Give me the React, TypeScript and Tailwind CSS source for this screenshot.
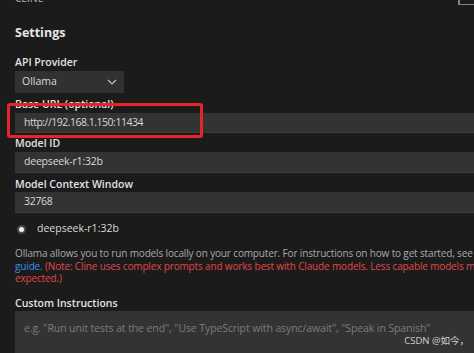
import React from "react";

const font = { fontFamily: '"Open Sans", "Noto Sans CJK SC", sans-serif' };

function Label({ text, mt }: { text: string; mt: string }) {
  return (
    <div className={`${mt} h-[14px] px-[15px] text-[10.5px] font-semibold leading-[14px] text-[#e2e2e2] whitespace-nowrap`}>
      {text}
    </div>
  );
}

function Input({ value, mt, h, track }: { value: string; mt: string; h: string; track: string }) {
  return (
    <div className={`${mt} ${h} ${track} ml-[15px] bg-[#333333] border-b border-[#3d3d3d] flex items-center pl-[9px] text-[10.5px] text-[#d8d8d8] whitespace-nowrap`}>
      {value}
    </div>
  );
}

export default function App() {
  return (
    <div
      className="relative w-[474px] h-[353px] overflow-hidden bg-[#1b1b1b] text-[#cccccc]"
      style={font}
    >
      <div className="h-[24px] overflow-hidden">
        <div className="-mt-[8px] px-[15px] text-[10px] leading-[12px] text-[#9a9a9a] font-semibold">CLINE</div>
      </div>
      <div className="absolute right-0 top-0 w-[16px] h-[5px] border-l-2 border-b border-[#8a7c8a]" />

      <div className="h-[18px] px-[15px] text-[12.5px] font-bold leading-[18px] text-[#e6e6e6]">Settings</div>

      <Label text="API Provider" mt="mt-[13px]" />
      <div className="ml-[15px] mt-[2px] w-[109px] h-[22px] bg-[#313131] flex items-center justify-between pl-[7px] pr-[7px] text-[10.5px] text-[#d8d8d8]">
        <span>Ollama</span>
        <svg width="10" height="6" viewBox="0 0 10 6" fill="none">
          <path d="M1 1l4 4 4-4" stroke="#c8c8c8" strokeWidth="1.1" />
        </svg>
      </div>

      <Label text="Base URL (optional)" mt="mt-[4px]" />
      <Input value="http://192.168.1.150:11434" mt="mt-[2px]" h="h-[20px]" track="tracking-[-0.5px]" />
      <Label text="Model ID" mt="mt-[3px]" />
      <Input value="deepseek-r1:32b" mt="mt-[2px]" h="h-[21px]" track="tracking-[-0.2px]" />
      <Label text="Model Context Window" mt="mt-[4px]" />
      <Input value="32768" mt="mt-[1px]" h="h-[21px]" track="tracking-[-0.3px]" />

      <div className="mt-[9px] h-[14px] ml-[17px] flex items-center gap-[11px] text-[10.5px] text-[#d8d8d8]">
        <div className="w-[9px] h-[9px] rounded-full bg-[#4a4a4a] flex items-center justify-center">
          <div className="w-[5px] h-[5px] rounded-full bg-[#f0f0f0]" />
        </div>
        <span>deepseek-r1:32b</span>
      </div>

      <div className="mt-[11px] px-[15px] text-[10px] tracking-[-0.15px] leading-[12.5px] text-[#a9a9a9] whitespace-nowrap">
        <div>
          Ollama allows you to run models locally on your computer. For instructions on how to get started, see their quickstart
        </div>
        <div>
          <span className="text-[#3b8eea]">guide.</span>{" "}
          <span className="text-[#e0474a]">
            (Note: Cline uses complex prompts and works best with Claude models. Less capable models may not work as
          </span>
        </div>
        <div className="text-[#e0474a]">expected.)</div>
      </div>

      <Label text="Custom Instructions" mt="mt-[11px]" />
      <div className="ml-[15px] mt-[1px] h-[60px] bg-[#333333] pl-[9px] pt-[10px] text-[10.5px] tracking-[-0.1px] text-[#7c7c7c] whitespace-nowrap">
        e.g. "Run unit tests at the end", "Use TypeScript with async/await", "Speak in Spanish"
      </div>

      <div className="absolute left-[7px] top-[103px] w-[196px] h-[35px] border-[3px] border-[#e5252a] rounded-[3px]" />

      <div className="absolute right-[5px] bottom-[5px] text-[9.5px] text-[#d0d0d0]">CSDN @如今，</div>
    </div>
  );
}
